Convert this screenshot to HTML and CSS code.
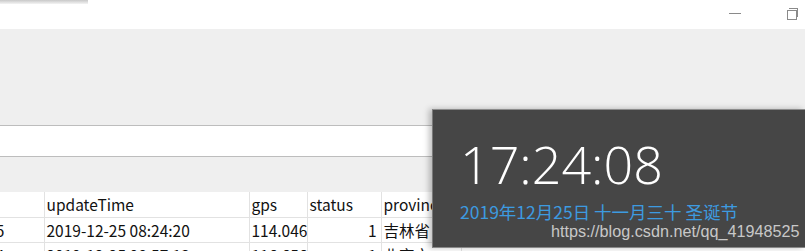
FILE: index.html
```html
<!DOCTYPE html>
<html lang="zh-CN">
<head>
    <meta charset="UTF-8">
    <title>Clock</title>
    <link rel="stylesheet" href="styles.css">
</head>
<body>

<div class="titlebar">
    <div class="shadow-tab"></div>
    <div class="win-btns">
        <span class="btn-min"></span>
        <span class="btn-restore"><i></i></span>
    </div>
</div>

<div class="toolbar"></div>
<div class="inputbar"></div>
<div class="spacer"></div>

<div class="grid-wrap">
    <table class="grid">
        <colgroup>
            <col class="c0"><col class="c1"><col class="c2"><col class="c3"><col class="c4">
        </colgroup>
        <tr>
            <td>createTime</td>
            <td>updateTime</td>
            <td>gps</td>
            <td>status</td>
            <td>province</td>
        </tr>
        <tr>
            <td>2019-12-25 08:24:25</td>
            <td>2019-12-25 08:24:20</td>
            <td>114.046125</td>
            <td class="num">1</td>
            <td>吉林省</td>
        </tr>
        <tr>
            <td>2019-12-25 08:57:14</td>
            <td>2019-12-25 08:57:13</td>
            <td>116.656102</td>
            <td class="num">1</td>
            <td>北京市</td>
        </tr>
    </table>
</div>

<div class="clock">
    <div class="time">17:24:08</div>
    <div class="date">2019年12月25日 十一月三十 圣诞节</div>
    <div class="mark">https://blog.csdn.net/qq_41948525</div>
</div>

</body>
</html>
```
FILE: styles.css
```css
body {
    margin: 0;
    width: 805px;
    height: 251px;
    overflow: hidden;
    position: relative;
    background: #fff;
    font-family: "Noto Sans CJK SC", "Noto Sans", sans-serif;
}
.titlebar {
    height: 29px;
    background: #fff;
    display: flex;
    justify-content: space-between;
}
.shadow-tab {
    width: 88px;
    height: 4px;
    background: linear-gradient(to bottom, #c8c8c8, #f4f4f4);
}
.win-btns {
    display: flex;
    align-items: flex-start;
}
.btn-min {
    width: 12px;
    height: 1px;
    background: #8a8a8a;
    margin-top: 13px;
    margin-right: 46px;
}
.btn-restore {
    position: relative;
    width: 8px;
    height: 8px;
    border: 1px solid #8a8a8a;
    margin-top: 10px;
    margin-right: 8px;
}
.btn-restore i {
    position: absolute;
    left: 1px;
    top: -3px;
    width: 8px;
    height: 8px;
    border-top: 1px solid #8a8a8a;
    border-right: 1px solid #8a8a8a;
}
.toolbar {
    height: 96px;
    background: #efefef;
}
.inputbar {
    height: 30px;
    border-top: 1px solid #bdbdbd;
    border-bottom: 1px solid #bdbdbd;
    background: #fff;
}
.spacer {
    height: 35px;
    background: #efefef;
}
.grid-wrap {
    overflow: hidden;
    height: 60px;
}
.grid {
    border-collapse: collapse;
    table-layout: fixed;
    width: 602px;
    margin-left: -141px;
    font-size: 15.5px;
    color: #111;
}
.grid .c0 { width: 185px; }
.grid .c1 { width: 205px; }
.grid .c2 { width: 58px; }
.grid .c3 { width: 74px; }
.grid .c4 { width: 80px; }
.grid td {
    height: 25px;
    padding: 0 0 0 2px;
    border-right: 1px solid #e2e2e2;
    border-bottom: 1px solid #e2e2e2;
    white-space: nowrap;
    overflow: hidden;
    line-height: 24px;
    box-sizing: border-box;
}
.grid .num {
    text-align: right;
    padding-right: 4px;
}
.clock {
    position: absolute;
    left: 432px;
    top: 109px;
    width: 373px;
    height: 139px;
    background: #464646;
    border-top: 1px solid #8c8c8c;
    border-left: 1px solid #7a7a7a;
    border-bottom: 1px solid #888;
    box-shadow: -3px 0 6px rgba(0, 0, 0, 0.25);
    box-sizing: border-box;
    padding: 24px 0 0 27px;
}
.time {
    font-family: "Open Sans", sans-serif;
    font-weight: 300;
    font-size: 52px;
    line-height: 60px;
    color: #fff;
}
.date {
    font-family: "Noto Sans CJK SC", sans-serif;
    font-size: 17.5px;
    line-height: 22px;
    color: #3d9be0;
    margin-top: 7px;
}
.mark {
    font-family: "Liberation Sans", Arial, sans-serif;
    font-size: 16.2px;
    color: #c8c8c8;
    margin-left: 91px;
    line-height: 16px;
    margin-top: 0;
    white-space: nowrap;
}
```
